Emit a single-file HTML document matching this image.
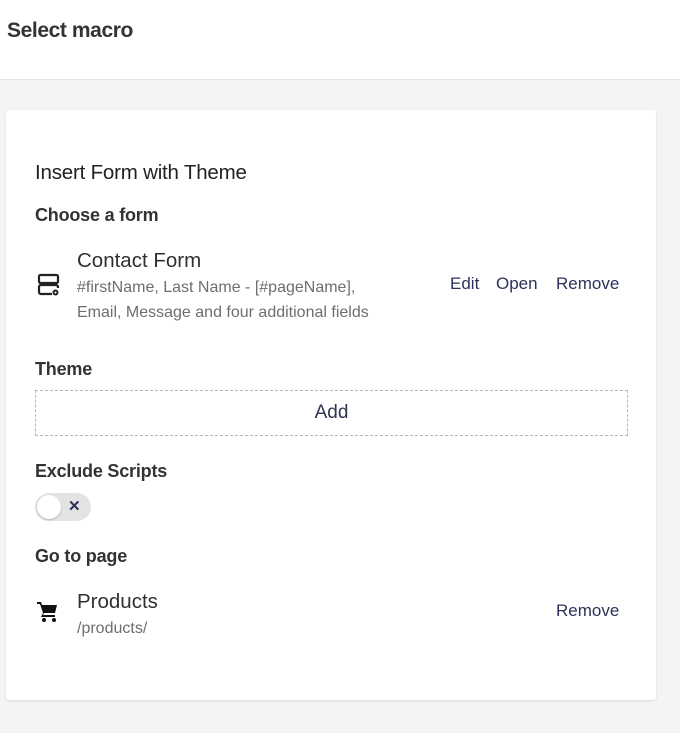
<!DOCTYPE html>
<html><head><meta charset="utf-8"><style>
*{box-sizing:border-box;margin:0;padding:0}
body{width:680px;height:733px;background:#f4f4f4;font-family:"Liberation Sans",sans-serif;color:#1b264f;position:relative;overflow:hidden}
.hdr{position:absolute;left:0;top:0;width:680px;height:80px;background:#fff;border-bottom:1px solid #e4e4e4}
.hdr span{position:absolute;left:7px;top:19px;font-size:21px;color:#333;font-weight:bold;letter-spacing:-0.4px}
.card{position:absolute;left:6px;top:110px;width:650px;height:590px;background:#fff;border-radius:3px;box-shadow:0 1px 2px rgba(0,0,0,.12)}
.t{position:absolute;color:#1b1b1b}
.lbl{font-size:18px;font-weight:bold;letter-spacing:-0.2px;color:#333}
.name{font-size:20.5px;color:#303030}
.desc{font-size:16px;color:#6e6e6e;line-height:25px}
.act{position:absolute;font-size:17px;color:#2c3258}
.add{position:absolute;left:29px;top:280px;width:593px;height:46px;border:1px dashed #b5b5b5;text-align:center;line-height:44px;font-size:19px;color:#303452}
.tog{position:absolute;left:29px;top:383px;width:56px;height:28px;border-radius:14px;background:#e3e3e3}
.tog .k{position:absolute;left:2px;top:2px;width:24px;height:24px;border-radius:12px;background:#fff;box-shadow:0 1px 2px rgba(0,0,0,.2)}
.tog .x{position:absolute;left:33px;top:4px;font-size:15px;font-weight:bold;color:#2c3258}
</style></head><body>
<div class="hdr"><span>Select macro</span></div>
<div class="card">
  <div class="t" style="left:29px;top:51px;font-size:20.5px;color:#222;letter-spacing:-0.2px">Insert Form with Theme</div>
  <div class="t lbl" style="left:29px;top:95px">Choose a form</div>
  <svg style="position:absolute;left:31px;top:163px" width="24" height="24" viewBox="0 0 24 24"><rect x="2" y="2" width="19" height="8" rx="1.5" fill="none" stroke="#222" stroke-width="2.2"/><path d="M15 21H4a2 2 0 0 1-2-2v-5a2 2 0 0 1 2-2h15a2 2 0 0 1 2 2v1" fill="none" stroke="#222" stroke-width="2.2"/><circle cx="18.5" cy="19.5" r="3" fill="#222"/><circle cx="18.5" cy="19.5" r="1" fill="#fff"/></svg>
  <div class="t name" style="left:71px;top:139px">Contact Form</div>
  <div class="t desc" style="left:71px;top:165px">#firstName, Last Name - [#pageName],<br>Email, Message and four additional fields</div>
  <div class="act" style="left:444px;top:164px">Edit</div>
  <div class="act" style="left:490px;top:164px">Open</div>
  <div class="act" style="left:550px;top:164px">Remove</div>
  <div class="t lbl" style="left:29px;top:249px">Theme</div>
  <div class="add">Add</div>
  <div class="t lbl" style="left:29px;top:351px">Exclude Scripts</div>
  <div class="tog"><div class="k"></div><div class="x">✕</div></div>
  <div class="t lbl" style="left:29px;top:436px">Go to page</div>
  <svg style="position:absolute;left:30px;top:490px" width="24" height="24" viewBox="0 0 24 24"><path d="M1 2h4l1 3h15l-2 8H8l-1 2h12v2H5l2-4L4 4H1z" fill="#111"/><circle cx="8" cy="20" r="2" fill="#111"/><circle cx="18" cy="20" r="2" fill="#111"/></svg>
  <div class="t name" style="left:71px;top:480px">Products</div>
  <div class="t desc" style="left:71px;top:506px">/products/</div>
  <div class="act" style="left:550px;top:491px">Remove</div>
</div>
</body></html>
